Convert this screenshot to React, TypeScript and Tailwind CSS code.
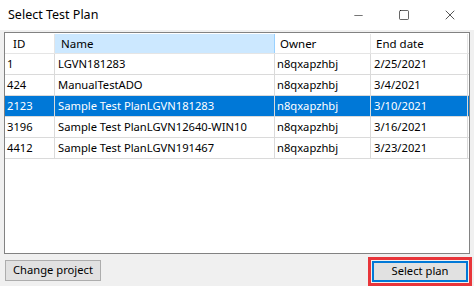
import { Minus, Square, X } from 'lucide-react'

type Plan = { id: string; name: string; owner: string; end: string }

const plans: Plan[] = [
  { id: '1', name: 'LGVN181283', owner: 'n8qxapzhbj', end: '2/25/2021' },
  { id: '424', name: 'ManualTestADO', owner: 'n8qxapzhbj', end: '3/4/2021' },
  { id: '2123', name: 'Sample Test PlanLGVN181283', owner: 'n8qxapzhbj', end: '3/10/2021' },
  { id: '3196', name: 'Sample Test PlanLGVN12640-WIN10', owner: 'n8qxapzhbj', end: '3/16/2021' },
  { id: '4412', name: 'Sample Test PlanLGVN191467', owner: 'n8qxapzhbj', end: '3/23/2021' },
]

const selected = '2123'

export default function App() {
  return (
    <div
      className="w-[474px] h-[286px] bg-[#f0f0f0] flex flex-col text-[11.2px] text-black overflow-hidden"
      style={{ fontFamily: '"Noto Sans", "DejaVu Sans", sans-serif' }}
    >
      {/* title bar */}
      <div className="h-[30px] bg-white flex items-center">
        <span className="pl-2 text-[12.5px] flex-1">Select Test Plan</span>
        <div className="flex h-full items-center">
          <span className="w-[46px] flex justify-center"><Minus size={13} strokeWidth={1} /></span>
          <span className="w-[46px] flex justify-center"><Square size={12} strokeWidth={1.2} /></span>
          <span className="w-[46px] flex justify-center mr-[1px]"><X size={16} strokeWidth={1} /></span>
        </div>
      </div>

      {/* list */}
      <div className="mt-[2px] ml-[4px] w-[466px] h-[222px] border border-[#828282] bg-white">
        <div className="mt-[1px] grid grid-cols-[50px_220px_96px_97px] h-[20px] border-b border-[#e5e5e5] text-[11.5px]">
          <div className="pl-[8px] flex items-center border-r border-[#e5e5e5]">ID</div>
          <div className="pl-[6px] flex items-center bg-[#cce8ff] border-r border-[#99d1ff]">Name</div>
          <div className="pl-[5px] flex items-center border-r border-[#e5e5e5]">Owner</div>
          <div className="pl-[5px] flex items-center border-r border-[#e5e5e5]">End date</div>
        </div>
        {plans.map(p => {
          const on = p.id === selected
          return (
            <div
              key={p.id}
              className={
                'grid grid-cols-[50px_220px_96px_97px] h-[21px] border-b border-[#dadada] ' +
                (on ? 'bg-[#0078d7] text-white' : '')
              }
            >
              <div className="pl-[2px] flex items-center border-r border-[#dadada]">{p.id}</div>
              <div className="pl-[3px] flex items-center border-r border-[#dadada]">{p.name}</div>
              <div className="pl-[2px] flex items-center border-r border-[#dadada]">{p.owner}</div>
              <div className="pl-[3px] flex items-center border-r border-[#dadada]">{p.end}</div>
            </div>
          )
        })}
      </div>

      {/* buttons */}
      <div className="flex justify-between items-start mt-[3px] pl-[5px] pr-[2px]">
        <button className="mt-[3px] w-[96px] h-[21px] bg-[#e1e1e1] border border-[#adadad] flex items-center justify-center">
          Change project
        </button>
        <div className="border-[3px] border-[#e8353a] p-[1px]">
          <button className="w-[96px] h-[21px] bg-[#e1e1e1] border-2 border-[#0078d7] flex items-center justify-center">
            Select plan
          </button>
        </div>
      </div>
    </div>
  )
}
